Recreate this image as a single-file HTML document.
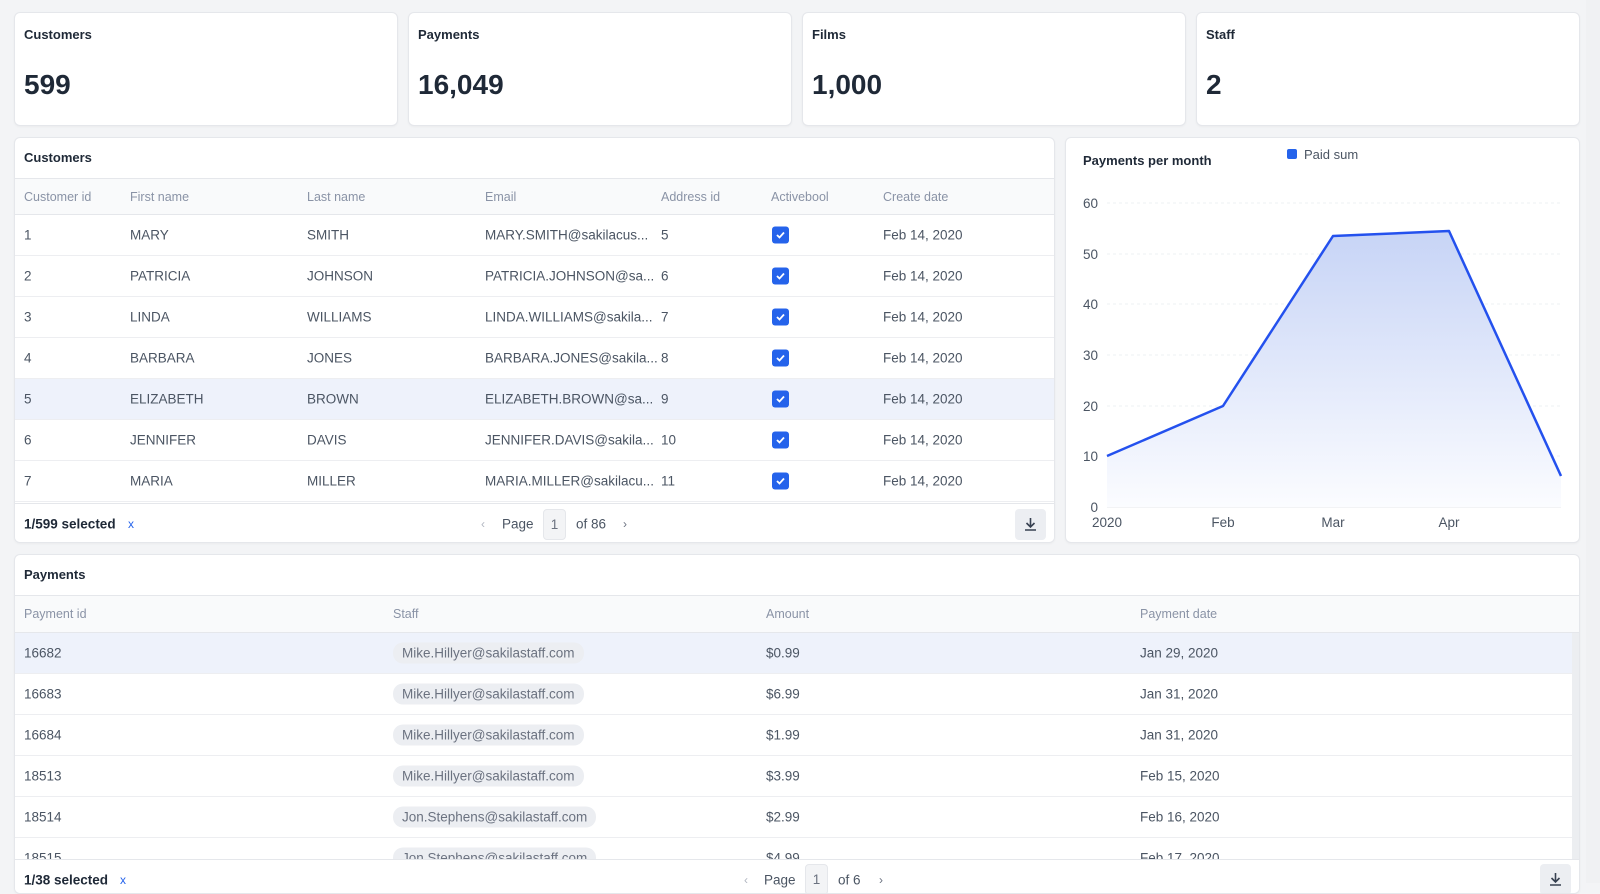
<!DOCTYPE html>
<html><head><meta charset="utf-8"><style>
*{box-sizing:border-box;margin:0;padding:0}
body{width:1600px;height:883px;overflow:hidden;background:#f3f4f6;font-family:"Liberation Sans",sans-serif;color:#374151;position:relative}
.card{position:absolute;background:#fff;border:1px solid #e5e7eb;border-radius:6px;box-shadow:0 1px 2px rgba(0,0,0,.04);overflow:hidden}
.stat .t{position:absolute;left:9px;top:14px;font-size:13px;font-weight:bold;color:#1f2937}
.stat .v{position:absolute;left:9px;top:56px;font-size:28px;font-weight:bold;color:#1f2937}
.title{position:absolute;left:9px;font-size:13px;font-weight:bold;color:#1f2937}
.hdr{position:absolute;left:0;right:0;background:#f9fafb;border-top:1px solid #e5e7eb;border-bottom:1px solid #e5e7eb;font-size:12.5px;color:#8a93a6}
.row{position:absolute;left:0;right:0;border-bottom:1px solid #edeef1;font-size:13.5px;color:#4b5563}
.c{position:absolute;top:50%;transform:translateY(-50%);white-space:nowrap}
.cb{width:17px;height:17px;background:#2563eb;border-radius:3px}
.cb svg{position:absolute;left:3px;top:3px}
.pill{background:#eceef2;border-radius:10px;padding:3px 9px;font-size:13.5px;color:#6b7280}
.foot{position:absolute;left:0;right:0;background:#fff;border-top:1px solid #e5e7eb;font-size:13.5px}
.dl{position:absolute;width:31px;height:31px;background:#eceef2;border-radius:4px}
.pg{position:absolute;width:23px;height:31px;background:#f3f4f6;border:1px solid #e5e7eb;border-radius:4px;text-align:center;line-height:29px;color:#6b7280}
</style></head><body>

<div class="card stat" style="left:14px;top:12px;width:384px;height:114px"><div class="t">Customers</div><div class="v">599</div></div>
<div class="card stat" style="left:408px;top:12px;width:384px;height:114px"><div class="t">Payments</div><div class="v">16,049</div></div>
<div class="card stat" style="left:802px;top:12px;width:384px;height:114px"><div class="t">Films</div><div class="v">1,000</div></div>
<div class="card stat" style="left:1196px;top:12px;width:384px;height:114px"><div class="t">Staff</div><div class="v">2</div></div>

<div class="card" style="left:14px;top:137px;width:1041px;height:406px">
<div class="title" style="top:12px">Customers</div>
<div class="hdr" style="top:40px;height:37px">
<span class="c" style="left:9px">Customer id</span><span class="c" style="left:115px">First name</span><span class="c" style="left:292px">Last name</span><span class="c" style="left:470px">Email</span><span class="c" style="left:646px">Address id</span><span class="c" style="left:756px">Activebool</span><span class="c" style="left:868px">Create date</span>
</div>
<div id="crows"></div>
<div class="foot" style="top:365px;height:41px">
<span class="c" style="left:9px;font-weight:bold;color:#1f2937">1/599 selected</span><span class="c" style="left:113px;color:#2563eb;font-size:12px">x</span>
<span class="c" style="left:466px;color:#b0b5c0;font-size:12px">‹</span><span class="c" style="left:487px;color:#4b5563">Page</span>
<div class="pg" style="left:528px;top:5px">1</div><span class="c" style="left:561px;color:#4b5563">of 86</span><span class="c" style="left:608px;color:#6b7280;font-size:12px">›</span>
<div class="dl" style="left:1000px;top:5px"><svg width="31" height="31" viewBox="0 0 31 31"><path d="M15.5 9v9M11.5 14l4 4 4-4M10 21h11" stroke="#374151" stroke-width="1.6" fill="none"/></svg></div>
</div>
</div>

<div class="card" style="left:1065px;top:137px;width:515px;height:406px"></div>
<svg style="position:absolute;left:0;top:0" width="1600" height="883">
<defs><linearGradient id="g" x1="0" y1="0" x2="0" y2="1"><stop offset="0" stop-color="#c7d4f6"/><stop offset="1" stop-color="#fbfcff"/></linearGradient></defs>
<text x="1083" y="165" font-family="Liberation Sans" font-size="13" font-weight="bold" fill="#1f2937">Payments per month</text>
<rect x="1287" y="149" width="10" height="10" rx="2" fill="#2563eb"/>
<text x="1304" y="159" font-family="Liberation Sans" font-size="13" fill="#4b5563">Paid sum</text>
<g stroke="#eef0f3" stroke-dasharray="3 3">
<line x1="1107" x2="1561" y1="203" y2="203"/><line x1="1107" x2="1561" y1="254" y2="254"/><line x1="1107" x2="1561" y1="304" y2="304"/><line x1="1107" x2="1561" y1="355" y2="355"/><line x1="1107" x2="1561" y1="406" y2="406"/><line x1="1107" x2="1561" y1="456" y2="456"/></g>
<line x1="1107" x2="1561" y1="507" y2="507" stroke="#e5e7eb"/>
<g font-family="Liberation Sans" font-size="13.5" fill="#4b5563" text-anchor="end">
<text x="1098" y="208">60</text><text x="1098" y="259">50</text><text x="1098" y="309">40</text><text x="1098" y="360">30</text><text x="1098" y="411">20</text><text x="1098" y="461">10</text><text x="1098" y="512">0</text></g>
<g font-family="Liberation Sans" font-size="13.5" fill="#4b5563" text-anchor="middle">
<text x="1107" y="527">2020</text><text x="1223" y="527">Feb</text><text x="1333" y="527">Mar</text><text x="1449" y="527">Apr</text></g>
<path d="M1107 456L1223 406L1333 236L1449 231L1561 476L1561 507L1107 507Z" fill="url(#g)"/>
<path d="M1107 456L1223 406L1333 236L1449 231L1561 476" stroke="#2451ee" stroke-width="2.5" fill="none" stroke-linejoin="round"/>
</svg>

<div class="card" style="left:14px;top:554px;width:1566px;height:340px">
<div class="title" style="top:12px">Payments</div>
<div class="hdr" style="top:40px;height:38px">
<span class="c" style="left:9px">Payment id</span><span class="c" style="left:378px">Staff</span><span class="c" style="left:751px">Amount</span><span class="c" style="left:1125px">Payment date</span>
</div>
<div id="prows"></div>
<div style="position:absolute;right:0;top:78px;width:7px;height:230px;background:#eceef1"></div>
<div class="foot" style="top:304px;height:40px">
<span class="c" style="left:9px;font-weight:bold;color:#1f2937">1/38 selected</span><span class="c" style="left:105px;color:#2563eb;font-size:12px">x</span>
<span class="c" style="left:729px;color:#b0b5c0;font-size:12px">‹</span><span class="c" style="left:749px;color:#4b5563">Page</span>
<div class="pg" style="left:790px;top:4px">1</div><span class="c" style="left:823px;color:#4b5563">of 6</span><span class="c" style="left:864px;color:#6b7280;font-size:12px">›</span>
<div class="dl" style="left:1525px;top:4px"><svg width="31" height="31" viewBox="0 0 31 31"><path d="M15.5 9v9M11.5 14l4 4 4-4M10 21h11" stroke="#374151" stroke-width="1.6" fill="none"/></svg></div>
</div>
</div>
<div style="position:absolute;right:0;top:0;width:14px;height:883px;background:#f0f1f3"></div>

<script>
var c=[["1","MARY","SMITH","MARY.SMITH@sakilacus...","5"],["2","PATRICIA","JOHNSON","PATRICIA.JOHNSON@sa...","6"],["3","LINDA","WILLIAMS","LINDA.WILLIAMS@sakila...","7"],["4","BARBARA","JONES","BARBARA.JONES@sakila...","8"],["5","ELIZABETH","BROWN","ELIZABETH.BROWN@sa...","9"],["6","JENNIFER","DAVIS","JENNIFER.DAVIS@sakila...","10"],["7","MARIA","MILLER","MARIA.MILLER@sakilacu...","11"]];
var h="",ck='<svg width="11" height="11" viewBox="0 0 11 11"><path d="M2 5.5l2.5 2.5L9 3" stroke="#fff" stroke-width="1.8" fill="none"/></svg>';
c.forEach(function(r,i){h+='<div class="row" style="top:'+(77+i*41)+'px;height:41px;'+(i==4?'background:#eef2fb':'')+'"><span class="c" style="left:9px">'+r[0]+'</span><span class="c" style="left:115px">'+r[1]+'</span><span class="c" style="left:292px">'+r[2]+'</span><span class="c" style="left:470px">'+r[3]+'</span><span class="c" style="left:646px">'+r[4]+'</span><span class="c cb" style="left:757px">'+ck+'</span><span class="c" style="left:868px">Feb 14, 2020</span></div>'});
document.getElementById("crows").innerHTML=h;
var p=[["16682","Mike.Hillyer","$0.99","Jan 29, 2020"],["16683","Mike.Hillyer","$6.99","Jan 31, 2020"],["16684","Mike.Hillyer","$1.99","Jan 31, 2020"],["18513","Mike.Hillyer","$3.99","Feb 15, 2020"],["18514","Jon.Stephens","$2.99","Feb 16, 2020"],["18515","Jon.Stephens","$4.99","Feb 17, 2020"]];
h="";p.forEach(function(r,i){h+='<div class="row" style="top:'+(78+i*41)+'px;height:41px;'+(i==0?'background:#eef2fb':'')+'"><span class="c" style="left:9px">'+r[0]+'</span><span class="c pill" style="left:378px">'+r[1]+'@sakilastaff.com</span><span class="c" style="left:751px">'+r[2]+'</span><span class="c" style="left:1125px">'+r[3]+'</span></div>'});
document.getElementById("prows").innerHTML=h;
</script>
</body></html>
